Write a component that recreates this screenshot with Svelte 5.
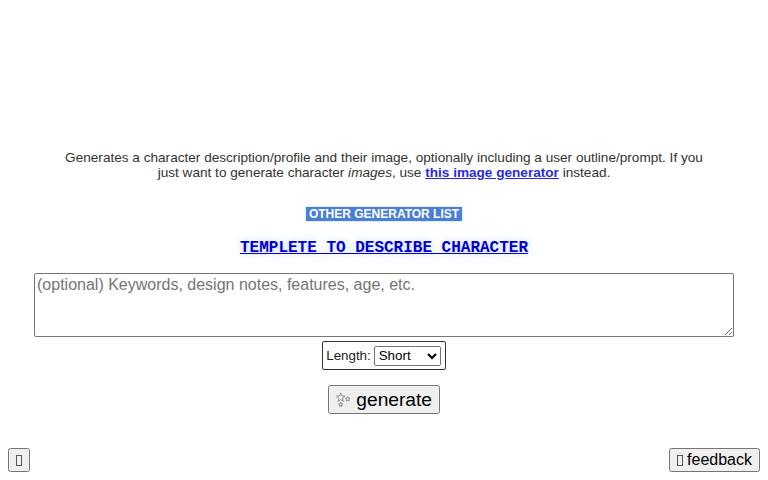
<script>
  let length = $state("Short");
</script>

<main class="page">
  <p class="description">
    Generates a character description/profile and their image, optionally including a user outline/prompt. If you just want to generate character <em>images</em>, use <a href="#image" class="inline-link">this image generator</a> instead.
  </p>

  <div class="list-row"><a href="#list" class="list-link">OTHER GENERATOR LIST</a></div>

  <div class="template-row"><a href="#template" class="template-link">TEMPLETE TO DESCRIBE CHARACTER</a></div>

  <textarea class="prompt" placeholder="(optional) Keywords, design notes, features, age, etc."></textarea>

  <div class="length-row">
    <label class="length-box">Length:
      <select bind:value={length}>
        <option>Short</option>
        <option>Medium</option>
        <option>Long</option>
      </select>
    </label>
  </div>

  <div class="generate-row">
    <button class="generate">
      <svg class="sparkle" viewBox="0 0 16 16" fill="none" stroke="#888" stroke-width="1">
        <polygon points="5,1 6.2,4.2 9.5,4.4 7,6.6 7.8,10 5,8.2 2.2,10 3,6.6 0.5,4.4 3.8,4.2" />
        <polygon points="12.5,5 13.2,6.6 15,6.8 13.7,8 14,9.6 12.5,8.8 11,9.6 11.3,8 10,6.8 11.8,6.6" />
        <polygon points="5,11 5.6,12.6 7.2,12.8 6,13.8 6.3,15.4 5,14.6 3.7,15.4 4,13.8 2.8,12.8 4.4,12.6" />
      </svg>
      generate
    </button>
  </div>
</main>

<button class="corner left"><span class="tofu"></span></button>
<button class="corner right"><span class="tofu"></span> feedback</button>

<style>
  :global(body) {
    background: #fff;
    font-family: "Liberation Sans", Arial, sans-serif;
  }

  .page {
    padding-top: 150px;
    height: 330px;
    text-align: center;
  }

  .description {
    width: 640px;
    margin: 0 auto;
    font-size: 13.6px;
    line-height: 15px;
    color: #333;
  }

  .inline-link {
    color: #2a2ae0;
    font-weight: 700;
  }

  .list-row {
    margin-top: 25px;
    line-height: 15px;
  }

  .list-link {
    display: inline-block;
    padding: 0 3px;
    background: #4a7fd6;
    color: #fff;
    font-size: 12px;
    font-weight: 700;
    line-height: 14px;
    text-decoration: none;
    box-shadow: 0 0 2px #a8c8ff;
  }

  .template-row {
    margin-top: 17px;
  }

  .template-link {
    color: #0000d0;
    font-family: "Liberation Mono", monospace;
    font-size: 16px;
    font-weight: 700;
    line-height: 18px;
    text-shadow: 0 0 8px #b8d0ff;
  }

  .prompt {
    display: block;
    box-sizing: border-box;
    width: 700px;
    height: 64px;
    margin: 16px auto 0;
    padding: 2px;
    border: 1px solid #767676;
    border-radius: 2px;
    font-family: "Liberation Sans", Arial, sans-serif;
    font-size: 16px;
  }

  .length-row {
    display: flex;
    justify-content: center;
    margin-top: 4px;
  }

  .length-box {
    display: inline-flex;
    align-items: center;
    gap: 3px;
    box-sizing: border-box;
    height: 29px;
    padding: 0 4px 0 3px;
    border: 1px solid #333;
    border-radius: 2px;
    font-size: 13.33px;
    color: #222;
  }

  .length-box select {
    width: 67px;
    height: 20px;
    padding-left: 0;
    font-size: 13.33px;
  }

  .generate-row {
    display: flex;
    justify-content: center;
    margin-top: 15px;
  }

  .generate {
    height: 29px;
    padding: 0 6px;
    font-family: "Liberation Sans", Arial, sans-serif;
    font-size: 19.2px;
  }

  .sparkle {
    width: 15px;
    height: 15px;
    vertical-align: -1px;
  }

  .corner {
    position: fixed;
    bottom: 8px;
    padding: 1px 6px;
    font-family: "Liberation Sans", Arial, sans-serif;
    font-size: 16px;
  }

  .left { left: 8px; }
  .right { right: 8px; }

  .tofu {
    display: inline-block;
    box-sizing: border-box;
    width: 6px;
    height: 11px;
    border: 1px solid #555;
    vertical-align: -1px;
  }
</style>
